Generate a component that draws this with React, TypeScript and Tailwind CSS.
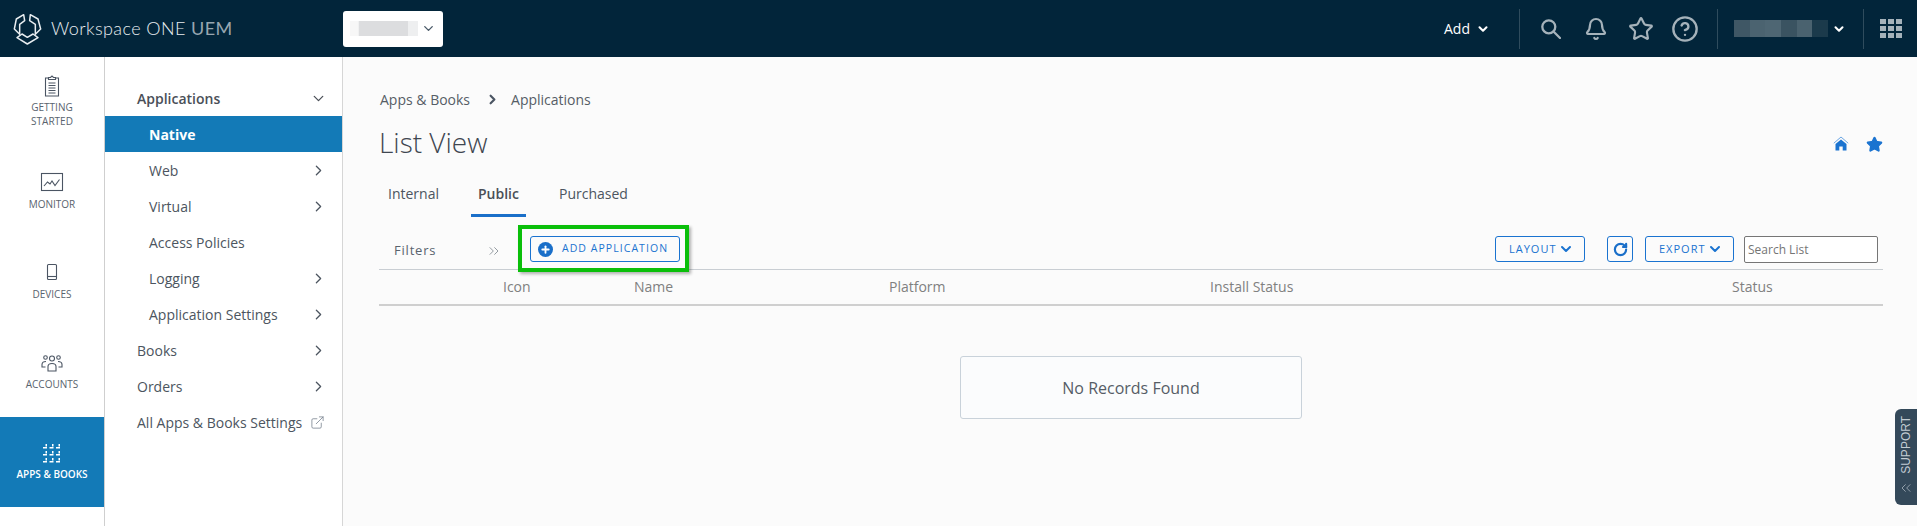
import { ChevronDown, ChevronRight, ChevronsRight, ChevronsLeft, Bell, Star, CircleHelp, ExternalLink, RotateCw, Plus } from 'lucide-react';

const openSans = { fontFamily: '"Open Sans", sans-serif' };

function Logo() {
  return (
    <svg width="40" height="40" viewBox="0 0 120 120" fill="none" stroke="#e8edf0" strokeWidth="4.500" strokeLinejoin="round">
      <path d="M47 17 25 30 19 60l16 16V46l15-11z" />
      <path d="M67 17l23 13 8 30-16 16V46L65 35z" />
      <path d="M27 86l15-11 16 10 17-10 15 11-32 19z" />
    </svg>
  );
}

function SearchIcon() {
  return (
    <svg width="20" height="20" viewBox="0 0 20 20" fill="none" stroke="#a5b2ba" strokeWidth="2.300" strokeLinecap="round">
      <circle cx="7.800" cy="7.800" r="6.500" />
      <path d="M12.500 12.500 19 19" />
    </svg>
  );
}

function RailIcon({ name }: { name: string }) {
  const color = name === 'apps' ? '#ffffff' : '#4b5563';
  if (name === 'started') {
    return (
      <svg width="24" height="24" viewBox="0 0 24 24" fill="none" stroke={color} strokeWidth="1.1">
        <path d="M8.500 4H5.500v18h13V4h-3" />
        <path d="M8.500 5.500V3.500h2l1.500-1.500 1.500 1.500h2v2z" />
        <path d="M8.500 9h7M8.500 11.500h7M8.500 14h7M8.500 16.500h7M8.500 19h7" />
      </svg>
    );
  }
  if (name === 'monitor') {
    return (
      <svg width="24" height="24" viewBox="0 0 24 24" fill="none" stroke={color} strokeWidth="1.1">
        <rect x="1.500" y="2.500" width="21" height="17" />
        <path d="M4 15l3.500-4 2.500 2 2-3 3 4.500 4.500-6" />
      </svg>
    );
  }
  if (name === 'devices') {
    return (
      <svg width="24" height="24" viewBox="0 0 24 24" fill="none" stroke={color} strokeWidth="1.1">
        <rect x="7.500" y="3.500" width="9" height="15" rx="1" />
        <path d="M7.500 15.500h9" />
      </svg>
    );
  }
  if (name === 'accounts') {
    return (
      <svg width="24" height="24" viewBox="0 0 24 24" fill="none" stroke={color} strokeWidth="1.1">
        <circle cx="12" cy="7.500" r="2.500" />
        <path d="M8 20v-4.500c0-2 1.500-3 4-3s4 1 4 3V20z" />
        <circle cx="5.500" cy="6.500" r="1.800" />
        <circle cx="18.500" cy="6.500" r="1.800" />
        <path d="M6 10.500c-2.500 0-4 1-4 3v2.500h3.500M18 10.500c2.500 0 4 1 4 3v2.500h-3.500" />
      </svg>
    );
  }
  return (
    <svg width="24" height="24" viewBox="0 0 24 24" fill={color}>
      {[3, 10, 17].map((y) =>
        [4, 10.500, 17].map((x) => (
          <g key={`${x}-${y}`}>
            <rect x={x + 1.500} y={y} width="1.500" height="2.500" />
            <rect x={x - 1} y={y + 3} width="4" height="1.500" />
          </g>
        ))
      )}
    </svg>
  );
}

function HomeIcon() {
  return (
    <svg width="16" height="16" viewBox="0 0 16 16">
      <path d="M.800 7.200 8 1l7.200 6.200" fill="none" stroke="#6aa5e3" strokeWidth="1" />
      <path d="M8 3.400 2.500 8v6.500h3.800v-4h3.400v4h3.800V8z" fill="#1a73d0" />
    </svg>
  );
}

const railItems = [
  { icon: 'started', label: ['GETTING', 'STARTED'] },
  { icon: 'monitor', label: ['MONITOR'] },
  { icon: 'devices', label: ['DEVICES'] },
  { icon: 'accounts', label: ['ACCOUNTS'] },
  { icon: 'apps', label: ['APPS & BOOKS'], active: true },
];

const subNav = [
  { label: 'Web', chevron: true },
  { label: 'Virtual', chevron: true },
  { label: 'Access Policies' },
  { label: 'Logging', chevron: true },
  { label: 'Application Settings', chevron: true },
];

const blocks = ['#3f5765', '#4b6370', '#4e6673', '#3a5361', '#4a626f', '#1b3a4b'];

function OutlineButton({ label, width }: { label: string; width: string }) {
  return (
    <div className={`flex h-[26px] items-center justify-between rounded-[3px] border border-[#1a73d0] pl-[13px] pr-[10px] ${width}`}>
      <span className="text-[11px] tracking-[1px] text-[#1a73d0]">{label}</span>
      <ChevronDown size={16} strokeWidth={3} className="text-[#1a73d0]" />
    </div>
  );
}

export default function App() {
  return (
    <div className="relative flex h-screen w-screen flex-col overflow-hidden bg-[#fbfbfb] text-[14px] text-[#4c5560]" style={openSans}>
      {/* Top bar */}
      <header className="flex h-[57px] shrink-0 items-center bg-[#02253a] pl-[8px]">
        <Logo />
        <span className="ml-[3px] w-[292px] text-[18px] font-light tracking-[0.4px] text-[#e8edf0]" style={{ fontFamily: 'Lato, sans-serif' }}>
          Workspace ONE <span className="font-normal text-[#97a6b0]">UEM</span>
        </span>
        <div className="flex h-[36px] w-[100px] items-center rounded-[3px] bg-white pl-[7px]">
          <div className="h-[15px] w-[68px] bg-[linear-gradient(90deg,#f7f7f7_0,#f7f7f7_12%,#dcdddf_14%,#dcdddf_85%,#eeeff0_86%)]" />
          <ChevronDown size={15} strokeWidth={2.2} className="ml-[3px] text-[#4a5a68]" />
        </div>
        <div className="ml-auto flex items-center pr-[15px]">
          <span className="text-[14px] font-medium text-white">Add</span>
          <ChevronDown size={14} strokeWidth={3.500} className="ml-[6px] text-white" />
          <div className="ml-[29px] h-[40px] w-px bg-[#2f4c5d]" />
          <div className="ml-[21px]">
            <SearchIcon />
          </div>
          <Bell size={24} strokeWidth={2.200} className="ml-[23px] text-[#a5b2ba]" />
          <Star size={26} strokeWidth={2} className="ml-[20px] text-[#a5b2ba]" />
          <CircleHelp size={28} strokeWidth={2} className="ml-[17px] text-[#a5b2ba]" />
          <div className="ml-[18px] h-[40px] w-px bg-[#2f4c5d]" />
          <div className="ml-[16px] flex h-[17px] w-[94px]">
            {blocks.map((c) => (
              <div key={c} className="h-full flex-1" style={{ backgroundColor: c }} />
            ))}
          </div>
          <ChevronDown size={14} strokeWidth={3.500} className="ml-[4px] text-white" />
          <div className="ml-[17px] h-[40px] w-px bg-[#2f4c5d]" />
          <div className="ml-[16px] grid grid-cols-3 gap-[2px]">
            {Array.from({ length: 9 }).map((_, i) => (
              <div key={i} className="h-[5px] w-[6px] bg-[#a5b2ba]" />
            ))}
          </div>
        </div>
      </header>

      <div className="flex min-h-0 flex-1">
        {/* Icon rail */}
        <nav className="w-[105px] shrink-0 border-r border-[#cfcfcf] bg-white">
          {railItems.map((item) => (
            <div
              key={item.icon}
              className={`flex h-[90px] flex-col items-center justify-center pb-[2px] text-[10px] leading-[14px] ${item.active ? 'bg-[#137ab7] font-semibold text-white' : 'text-[#59636e]'}`}
            >
              <RailIcon name={item.icon} />
              <div className="mt-[2px] text-center">
                {item.label.map((l) => (
                  <div key={l}>{l}</div>
                ))}
              </div>
            </div>
          ))}
        </nav>

        {/* Section nav */}
        <nav className="w-[238px] shrink-0 border-r border-[#d6d6d6] bg-white pt-[23px]">
          <div className="flex h-[36px] items-center justify-between pl-[32px] pr-[15px] font-semibold text-[#4a4f57]">
            Applications
            <ChevronDown size={17} strokeWidth={1.800} />
          </div>
          <div className="flex h-[36px] items-center bg-[#137ab7] pl-[44px] font-bold text-white">Native</div>
          {subNav.map((row) => (
            <div key={row.label} className="flex h-[36px] items-center justify-between pl-[44px] pr-[15px]">
              {row.label}
              {row.chevron && <ChevronRight size={17} strokeWidth={1.800} />}
            </div>
          ))}
          <div className="flex h-[36px] items-center justify-between pl-[32px] pr-[15px]">
            Books
            <ChevronRight size={17} strokeWidth={1.800} />
          </div>
          <div className="flex h-[36px] items-center justify-between pl-[32px] pr-[15px]">
            Orders
            <ChevronRight size={17} strokeWidth={1.800} />
          </div>
          <div className="flex h-[36px] items-center pl-[32px]">
            All Apps &amp; Books Settings
            <ExternalLink size={15} strokeWidth={1.300} className="ml-[8px] text-[#7b8591]" />
          </div>
        </nav>

        {/* Main */}
        <main className="min-w-0 flex-1 pl-[36px] pr-[34px]">
          <div className="mt-[32px] flex h-[20px] items-center pl-[1px] text-[#565d66]">
            Apps &amp; Books
            <ChevronRight size={15} strokeWidth={3.500} className="ml-[15px] mr-[11px] text-[#4b5563]" />
            Applications
          </div>
          <div className="mt-[14px] flex h-[38px] items-center justify-between">
            <h1 className="text-[28px] font-light leading-[38px] text-[#3f4650]">List View</h1>
            <div className="mt-[4px] flex items-center gap-[17px]">
              <HomeIcon />
              <Star size={17} fill="#1a73d0" className="text-[#1a73d0]" />
            </div>
          </div>

          <div className="mt-[11px] flex h-[45px]">
            <div className="w-[92px] pl-[9px] pt-[11px]">Internal</div>
            <div className="flex w-[55px] items-start justify-center border-b-[3px] border-[#1a6fc9] pt-[11px] font-semibold text-[#4a4f57]">Public</div>
            <div className="ml-[33px] pt-[11px]">Purchased</div>
          </div>

          <div className="relative flex h-[53px] items-center border-b border-[#c9ced3] pt-[12px]">
            <span className="ml-[15px] mt-[3px] w-[92px] text-[13px] tracking-[0.800px] text-[#59636e]">Filters</span>
            <ChevronsRight size={16} strokeWidth={1} className="mt-[3px] text-[#5f6973]" />
            <div className="ml-[28px] flex h-[26px] w-[150px] items-center rounded-[3px] border border-[#1a73d0] pl-[7px]">
              <span className="flex h-[15px] w-[15px] items-center justify-center rounded-full bg-[#1a6fc9]">
                <Plus size={11} strokeWidth={4} className="text-white" />
              </span>
              <span className="ml-[9px] text-[10.500px] tracking-[1.050px] text-[#1a73d0]">ADD APPLICATION</span>
            </div>
            {/* Highlight drawn on top of the screenshot */}
            <div className="pointer-events-none absolute left-[139px] top-[8px] h-[47px] w-[171px] border-[4px] border-[#0abf0a] shadow-[2px_2px_3px_rgba(0,0,0,0.3)]" />
            <div className="ml-auto mr-[5px] flex items-center">
              <OutlineButton label="LAYOUT" width="w-[90px]" />
              <div className="ml-[22px] flex h-[26px] w-[26px] items-center justify-center rounded-[3px] border border-[#1a73d0]">
                <RotateCw size={15} strokeWidth={3.500} className="text-[#1a6fc9]" />
              </div>
              <div className="ml-[12px]">
                <OutlineButton label="EXPORT" width="w-[89px]" />
              </div>
              <div className="ml-[10px] flex h-[27px] w-[134px] items-center rounded-[2px] border border-[#767676] bg-white pl-[3px] pt-[2px] text-[12px] text-[#757575]">
                Search List
              </div>
            </div>
          </div>

          <div className="flex h-[36px] items-center border-b-2 border-[#cfcfcf] pb-[2px] text-[#808080]">
            <span className="ml-[124px] w-[131px]">Icon</span>
            <span className="w-[255px]">Name</span>
            <span className="w-[321px]">Platform</span>
            <span className="w-[522px]">Install Status</span>
            <span>Status</span>
          </div>

          <div className="ml-[581px] mt-[50px] flex h-[63px] w-[342px] items-center justify-center rounded-[3px] border border-[#c9d2da] bg-[#fbfcfd] text-[16px] text-[#565d66]">
            No Records Found
          </div>
        </main>
      </div>

      {/* Support tab */}
      <div className="absolute bottom-[21px] right-0 flex h-[96px] w-[22px] flex-col items-center justify-between rounded-l-[6px] bg-[#34495a] pb-[9px] pt-[7px] text-[#c3ccd3]">
        <span className="rotate-180 text-[12px] leading-[22px] [writing-mode:vertical-rl]" style={{ fontFamily: '"Liberation Sans", sans-serif' }}>
          SUPPORT
        </span>
        <ChevronsLeft size={16} strokeWidth={1} />
      </div>
    </div>
  );
}
